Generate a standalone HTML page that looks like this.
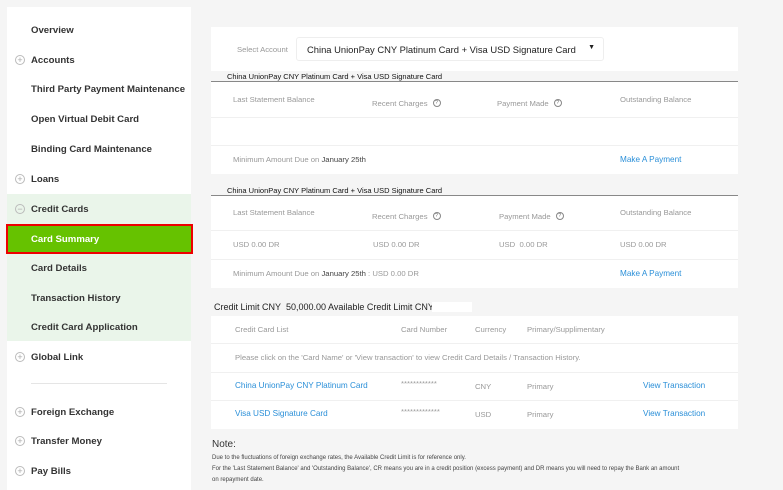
<!DOCTYPE html>
<html><head><style>
*{margin:0;padding:0;box-sizing:border-box}
body{width:783px;height:490px;background:#f5f5f5;font-family:"Liberation Sans",sans-serif;position:relative;overflow:hidden}
.a{position:absolute;white-space:nowrap}
.side{position:absolute;left:7px;top:7px;width:184px;height:483px;background:#fff}
.nav{position:absolute;left:31px;font-size:9.6px;font-weight:bold;color:#333;transform:translateY(-45%)}
.ic{position:absolute;left:15px;width:10px;height:10px;border:1px solid #bbb;border-radius:50%;transform:translateY(-50%);font-size:9px;line-height:8px;text-align:center;color:#aaa;font-weight:normal}
.p{position:absolute;left:211px;width:527px;background:#fff}
.g{color:#999;font-size:7.7px}
.row{position:absolute;left:0;width:527px;border-top:1px solid #f0f0f0}
.bl{color:#2a8fd8;font-size:8.2px}
.q{display:inline-block;width:8px;height:8px;border:1px solid #888;border-radius:50%;font-size:5px;line-height:6px;text-align:center;color:#666;vertical-align:top;margin-left:5px}
</style></head><body>
<div class="side"></div>
<div class="a" style="left:7px;top:194px;width:184px;height:147px;background:#eaf5ea"></div>
<div class="a" style="left:6px;top:224px;width:187px;height:30px;background:#66c200;border:2px solid #e00"></div>
<div class="nav" style="top:30px">Overview</div>
<div class="ic" style="top:60px">+</div><div class="nav" style="top:60px">Accounts</div>
<div class="nav" style="top:89px">Third Party Payment Maintenance</div>
<div class="nav" style="top:119px">Open Virtual Debit Card</div>
<div class="nav" style="top:149px">Binding Card Maintenance</div>
<div class="ic" style="top:179px">+</div><div class="nav" style="top:179px">Loans</div>
<div class="ic" style="top:209px">−</div><div class="nav" style="top:209px">Credit Cards</div>
<div class="nav" style="top:239px;color:#fff">Card Summary</div>
<div class="nav" style="top:268px">Card Details</div>
<div class="nav" style="top:298px">Transaction History</div>
<div class="nav" style="top:327px">Credit Card Application</div>
<div class="ic" style="top:357px">+</div><div class="nav" style="top:357px">Global Link</div>
<div class="a" style="left:31px;top:383px;width:136px;height:1px;background:#e5e5e5"></div>
<div class="ic" style="top:412px">+</div><div class="nav" style="top:412px">Foreign Exchange</div>
<div class="ic" style="top:441px">+</div><div class="nav" style="top:441px">Transfer Money</div>
<div class="ic" style="top:471px">+</div><div class="nav" style="top:471px">Pay Bills</div>

<div class="p" style="top:27px;height:44px"></div>
<div class="a g" style="left:237px;top:45px">Select Account</div>
<div class="a" style="left:296px;top:37px;width:308px;height:24px;border:1px solid #eee;border-radius:3px;font-size:9.4px;color:#222;padding:6px 0 0 10px">China UnionPay CNY Platinum Card + Visa USD Signature Card<span style="position:absolute;right:8px;top:6px;font-size:7px">▼</span></div>

<div class="a" style="left:227px;top:72px;font-size:7.5px;color:#111">China UnionPay CNY Platinum Card + Visa USD Signature Card</div>
<div class="a" style="left:211px;top:81px;width:527px;height:1px;background:#888"></div>
<div class="p" style="top:82px;height:92px">
<div class="row" style="top:35px"></div><div class="row" style="top:63px"></div></div>
<div class="a g" style="left:233px;top:95px">Last Statement Balance</div>
<div class="a g" style="left:372px;top:99px">Recent Charges<span class="q">?</span></div>
<div class="a g" style="left:497px;top:99px">Payment Made<span class="q">?</span></div>
<div class="a g" style="left:620px;top:95px">Outstanding Balance</div>
<div class="a g" style="left:233px;top:155px">Minimum Amount Due on <b style="color:#444;font-weight:normal">January 25th</b></div>
<div class="a bl" style="left:620px;top:155px">Make A Payment</div>

<div class="a" style="left:227px;top:186px;font-size:7.5px;color:#111">China UnionPay CNY Platinum Card + Visa USD Signature Card</div>
<div class="a" style="left:211px;top:195px;width:527px;height:1px;background:#888"></div>
<div class="p" style="top:196px;height:92px">
<div class="row" style="top:34px"></div><div class="row" style="top:63px"></div></div>
<div class="a g" style="left:233px;top:208px">Last Statement Balance</div>
<div class="a g" style="left:372px;top:212px">Recent Charges<span class="q">?</span></div>
<div class="a g" style="left:499px;top:212px">Payment Made<span class="q">?</span></div>
<div class="a g" style="left:620px;top:208px">Outstanding Balance</div>
<div class="a g" style="left:233px;top:240px">USD 0.00 DR</div>
<div class="a g" style="left:373px;top:240px">USD 0.00 DR</div>
<div class="a g" style="left:499px;top:240px">USD&nbsp; 0.00 DR</div>
<div class="a g" style="left:620px;top:240px">USD 0.00 DR</div>
<div class="a g" style="left:233px;top:269px">Minimum Amount Due on <span style="color:#444">January 25th</span> : USD 0.00 DR</div>
<div class="a bl" style="left:620px;top:269px">Make A Payment</div>

<div class="a" style="left:214px;top:302px;font-size:9px;color:#222">Credit Limit CNY&nbsp; 50,000.00 Available Credit Limit CNY</div>
<div class="a" style="left:432px;top:302px;width:40px;height:10px;background:#fff"></div>
<div class="p" style="top:316px;height:113px">
<div class="row" style="top:27px"></div><div class="row" style="top:56px"></div><div class="row" style="top:84px"></div></div>
<div class="a g" style="left:235px;top:325px">Credit Card List</div>
<div class="a g" style="left:401px;top:325px">Card Number</div>
<div class="a g" style="left:475px;top:325px">Currency</div>
<div class="a g" style="left:527px;top:325px">Primary/Supplimentary</div>
<div class="a g" style="left:235px;top:353px">Please click on the 'Card Name' or 'View transaction' to view Credit Card Details / Transaction History.</div>
<div class="a bl" style="left:235px;top:381px">China UnionPay CNY Platinum Card</div>
<div class="a g" style="left:401px;top:379px">************</div>
<div class="a g" style="left:475px;top:382px">CNY</div>
<div class="a g" style="left:527px;top:382px">Primary</div>
<div class="a bl" style="left:643px;top:381px">View Transaction</div>
<div class="a bl" style="left:235px;top:409px">Visa USD Signature Card</div>
<div class="a g" style="left:401px;top:407px">*************</div>
<div class="a g" style="left:475px;top:410px">USD</div>
<div class="a g" style="left:527px;top:410px">Primary</div>
<div class="a bl" style="left:643px;top:409px">View Transaction</div>

<div class="a" style="left:212px;top:439px;font-size:10px;color:#333">Note:</div>
<div class="a" style="left:212px;top:455px;font-size:6px;color:#444">Due to the fluctuations of foreign exchange rates, the Available Credit Limit is for reference only.</div>
<div class="a" style="left:212px;top:466px;font-size:6px;color:#444">For the 'Last Statement Balance' and 'Outstanding Balance', CR means you are in a credit position (excess payment) and DR means you will need to repay the Bank an amount</div>
<div class="a" style="left:212px;top:477px;font-size:6px;color:#444">on repayment date.</div>
</body></html>
